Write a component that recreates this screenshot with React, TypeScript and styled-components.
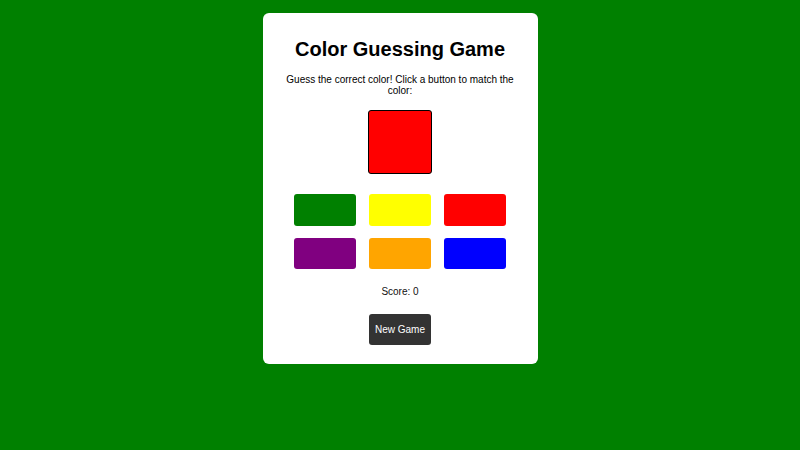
import { useState } from "react"
import styled, { createGlobalStyle } from "styled-components"

const COLORS = ["green", "yellow", "red", "purple", "orange", "blue"]

const GlobalStyle = createGlobalStyle`
    html, body {
        margin: 0;
        padding: 0;
        background: #008000;
        font-family: "Liberation Sans", Arial, sans-serif;
    }
`

const pickColor = () => COLORS[Math.floor(Math.random() * COLORS.length)]

export default function App() {
    const [target, setTarget] = useState<string>("red")
    const [score, setScore] = useState<number>(0)

    const handleGuess = (color: string) => {
        if (color === target) {
            setScore(score + 1)
            setTarget(pickColor())
        }
    }

    const newGame = () => {
        setScore(0)
        setTarget(pickColor())
    }

    return (
        <>
            <GlobalStyle />
            <Page>
                <Card>
                    <Title>Color Guessing Game</Title>
                    <Prompt>Guess the correct color! Click a button to match the color:</Prompt>
                    <Swatch $color={target} />
                    <Options>
                        {COLORS.map(color => (
                            <ColorButton key={color} $color={color} onClick={() => handleGuess(color)} />
                        ))}
                    </Options>
                    <Score>Score: {score}</Score>
                    <NewGameButton onClick={newGame}>New Game</NewGameButton>
                </Card>
            </Page>
        </>
    )
}

const Page = styled.div`
    min-height: 100vh;
    padding-top: 12.5px;
    box-sizing: border-box;
`

const Card = styled.div`
    width: 275px;
    margin: 0 auto;
    padding: 12.5px;
    box-sizing: border-box;
    background: #fff;
    border-radius: 6px;
    text-align: center;
    color: #000;
`

const Title = styled.h1`
    margin: 12.5px 0 13.4px;
    font-size: 20px;
    line-height: 23px;
    font-weight: 700;
`

const Prompt = styled.p`
    margin: 0;
    font-size: 10px;
    line-height: 11.5px;
`

const Swatch = styled.div<{ $color: string }>`
    width: 64.5px;
    height: 64.5px;
    margin: 13px auto 12.5px;
    box-sizing: border-box;
    border: 1.25px solid #000;
    border-radius: 3px;
    background: ${p => p.$color};
`

const Options = styled.div`
    display: grid;
    grid-template-columns: repeat(3, 62.5px);
    grid-auto-rows: 31.25px;
    gap: 12.5px;
    justify-content: center;
    margin: 20px 0 6.25px;
`

const ColorButton = styled.button<{ $color: string }>`
    border: none;
    border-radius: 3px;
    padding: 0;
    cursor: pointer;
    background: ${p => p.$color};
`

const Score = styled.p`
    margin: 16.5px 0 0;
    font-size: 10px;
    line-height: 11.5px;
    color: #111;
`

const NewGameButton = styled.button`
    display: block;
    width: 62.5px;
    height: 31.25px;
    margin: 16.5px auto 6.25px;
    padding: 0;
    border: none;
    border-radius: 3px;
    background: #333;
    color: #fff;
    font-family: "Liberation Sans", Arial, sans-serif;
    font-size: 10px;
    cursor: pointer;
`
